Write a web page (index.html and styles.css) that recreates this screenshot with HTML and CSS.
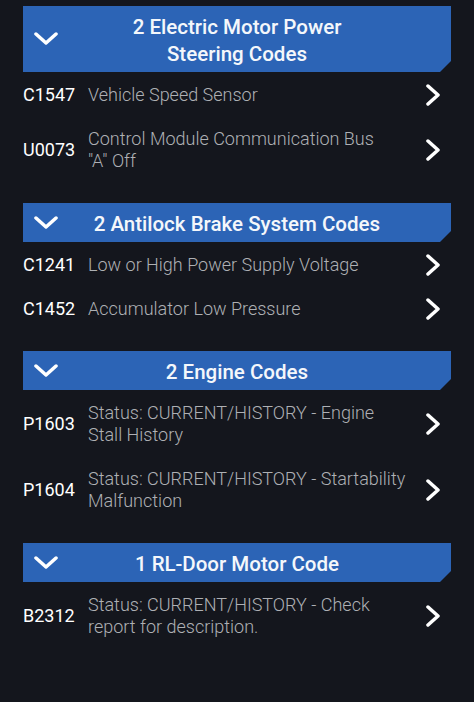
FILE: index.html
```html
<!DOCTYPE html>
<html lang="en">
<head>
    <meta charset="UTF-8">
    <title>Trouble Codes</title>
    <link rel="stylesheet" href="styles.css">
</head>
<body>
    <div class="code-list">

        <!-- Electric Motor Power Steering -->
        <section class="group">
            <div class="group-header">
                <svg class="toggle" viewBox="0 0 24 14" width="24" height="14"><path d="M2 2 L12 11 L22 2"/></svg>
                <h2>2 Electric Motor Power<br>Steering Codes</h2>
            </div>
            <div class="code-row">
                <span class="code">C1547</span>
                <span class="desc">Vehicle Speed Sensor</span>
                <svg class="go" viewBox="0 0 14 22" width="14" height="22"><path d="M2 2 L12 11 L2 20"/></svg>
            </div>
            <div class="code-row">
                <span class="code">U0073</span>
                <span class="desc">Control Module Communication Bus<br>"A" Off</span>
                <svg class="go" viewBox="0 0 14 22" width="14" height="22"><path d="M2 2 L12 11 L2 20"/></svg>
            </div>
        </section>

        <!-- Antilock Brake System -->
        <section class="group">
            <div class="group-header">
                <svg class="toggle" viewBox="0 0 24 14" width="24" height="14"><path d="M2 2 L12 11 L22 2"/></svg>
                <h2>2 Antilock Brake System Codes</h2>
            </div>
            <div class="code-row">
                <span class="code">C1241</span>
                <span class="desc">Low or High Power Supply Voltage</span>
                <svg class="go" viewBox="0 0 14 22" width="14" height="22"><path d="M2 2 L12 11 L2 20"/></svg>
            </div>
            <div class="code-row">
                <span class="code">C1452</span>
                <span class="desc">Accumulator Low Pressure</span>
                <svg class="go" viewBox="0 0 14 22" width="14" height="22"><path d="M2 2 L12 11 L2 20"/></svg>
            </div>
        </section>

        <!-- Engine -->
        <section class="group">
            <div class="group-header">
                <svg class="toggle" viewBox="0 0 24 14" width="24" height="14"><path d="M2 2 L12 11 L22 2"/></svg>
                <h2>2 Engine Codes</h2>
            </div>
            <div class="code-row">
                <span class="code">P1603</span>
                <span class="desc">Status: CURRENT/HISTORY - Engine<br>Stall History</span>
                <svg class="go" viewBox="0 0 14 22" width="14" height="22"><path d="M2 2 L12 11 L2 20"/></svg>
            </div>
            <div class="code-row">
                <span class="code">P1604</span>
                <span class="desc">Status: CURRENT/HISTORY - Startability<br>Malfunction</span>
                <svg class="go" viewBox="0 0 14 22" width="14" height="22"><path d="M2 2 L12 11 L2 20"/></svg>
            </div>
        </section>

        <!-- RL-Door Motor -->
        <section class="group">
            <div class="group-header">
                <svg class="toggle" viewBox="0 0 24 14" width="24" height="14"><path d="M2 2 L12 11 L22 2"/></svg>
                <h2>1 RL-Door Motor Code</h2>
            </div>
            <div class="code-row">
                <span class="code">B2312</span>
                <span class="desc">Status: CURRENT/HISTORY - Check<br>report for description.</span>
                <svg class="go" viewBox="0 0 14 22" width="14" height="22"><path d="M2 2 L12 11 L2 20"/></svg>
            </div>
        </section>

    </div>
</body>
</html>
```

FILE: styles.css
```css
body {
    margin: 0;
    background-color: #14161d;
    color: #fff;
    font-family: Roboto, 'Liberation Sans', sans-serif;
}

.code-list {
    display: flex;
    flex-direction: column;
    gap: 21px;
    padding: 6px 23px 0 23px;
}

/* Blue section bar with the cut bottom-right corner */
.group-header {
    position: relative;
    display: flex;
    align-items: center;
    justify-content: center;
    padding: 8px 40px 4px 40px;
    background-color: #2c64b6;
    clip-path: polygon(0 0, 100% 0, 100% calc(100% - 11px), calc(100% - 11px) 100%, 0 100%);
}

.group-header h2 {
    margin: 0;
    font-family: 'Roboto Medium', Roboto, 'Liberation Sans', sans-serif;
    font-size: 20.5px;
    font-weight: 500;
    line-height: 27px;
    text-align: center;
    color: #f4f7fb;
}

.group-header .toggle {
    position: absolute;
    left: 11px;
    top: 50%;
    margin-top: -7px;
}

.toggle path,
.go path {
    fill: none;
    stroke: #fff;
    stroke-width: 3.5;
    stroke-linecap: round;
    stroke-linejoin: round;
}

.code-row {
    display: flex;
    align-items: center;
    padding: 12px 0 10px 0;
    line-height: 22px;
}

.code {
    width: 65px;
    flex-shrink: 0;
    font-size: 18px;
    color: #fff;
}

.desc {
    flex: 1;
    font-family: 'Roboto Light', Roboto, 'Liberation Sans', sans-serif;
    font-size: 18px;
    font-weight: 300;
    color: #aeb0b4;
}

.go {
    flex-shrink: 0;
    margin-right: 11px;
}
```
